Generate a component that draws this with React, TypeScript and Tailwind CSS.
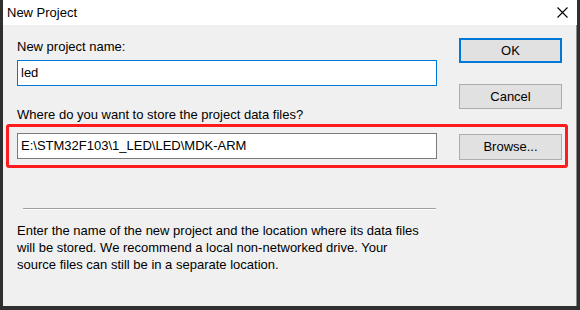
export default function App() {
  return (
    <div className="w-[580px] h-[310px] bg-[#2f2f2f] pl-[3px] pr-[3px] pb-[4px] flex">
      <div className="w-[574px] h-[306px] flex flex-col font-['Liberation_Sans',Arial,sans-serif] text-black">
        {/* title bar */}
        <div className="h-[25px] bg-white flex items-center justify-between pl-[4px] pr-[9px] shrink-0">
          <span className="text-[13px] leading-none">New Project</span>
          <svg width="11" height="11" viewBox="0 0 11 11" className="text-black">
            <path d="M0.5 0.5 L10.5 10.5 M10.5 0.5 L0.5 10.5" stroke="currentColor" strokeWidth="1.1" />
          </svg>
        </div>

        {/* body */}
        <div className="flex-1 bg-[#f0f0f0] border-r border-[#8a8a8a] pl-[14px] pt-[13px] flex flex-col text-[13px]">
          <div className="flex gap-[22px]">
            <div className="w-[420px] flex flex-col">
              <label className="leading-[16px] mt-[1px]">New project name:</label>
              <div className="mt-[5px] h-[26px] border border-[#0078d7] bg-white flex items-center px-[3px]">
                led
              </div>
            </div>
            <div className="w-[103px] flex flex-col">
              <button className="h-[25px] border-2 border-[#0078d7] bg-[#e1e1e1] text-[13px]">OK</button>
              <button className="mt-[21px] h-[25px] border border-[#adadad] bg-[#e1e1e1] text-[13px]">Cancel</button>
            </div>
          </div>

          <label className="leading-[16px] -mt-[2px]">Where do you want to store the project data files?</label>

          <div className="relative flex gap-[22px] mt-[10px]">
            <div className="w-[420px] h-[26px] border border-[#7a7a7a] bg-white flex items-center px-[3px]">
              E:\STM32F103\1_LED\LED\MDK-ARM
            </div>
            <button className="w-[103px] h-[26px] mt-[1px] border border-[#adadad] bg-[#e1e1e1] text-[13px]">
              Browse...
            </button>
            {/* red annotation box */}
            <div className="absolute left-[-11px] top-[-9px] w-[562px] h-[44px] border-[3px] border-[#ff1c1c] rounded-[3px] pointer-events-none" />
          </div>

          <div className="ml-[6px] mt-[48px] w-[413px] border-t border-[#a0a0a0] border-b border-b-white" />

          <p className="mt-[12px] w-[412px] leading-[17px]">
            Enter the name of the new project and the location where its data files will be stored. We recommend a local non-networked drive. Your source files can still be in a separate location.
          </p>
        </div>
      </div>
    </div>
  )
}
